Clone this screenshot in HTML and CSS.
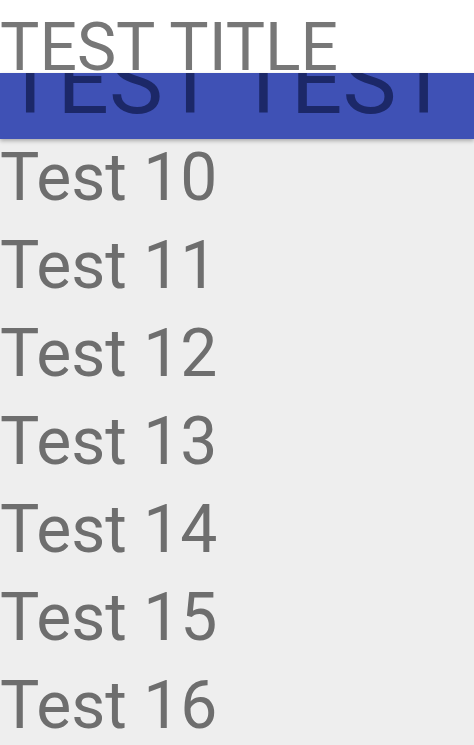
FILE: index.html
```html
<!DOCTYPE html>
<html>
<head>
<meta charset="utf-8">
<link rel="stylesheet" href="styles.css">
</head>
<body>
<div class="title">TEST TITLE</div>
<div class="bar"><div class="bar-text">TEST TEST</div></div>
<ul class="list">
  <li class="row">Test 10</li>
  <li class="row">Test 11</li>
  <li class="row">Test 12</li>
  <li class="row">Test 13</li>
  <li class="row">Test 14</li>
  <li class="row">Test 15</li>
  <li class="row">Test 16</li>
</ul>
</body>
</html>
```
FILE: styles.css
```css
html, body {
  margin: 0;
  padding: 0;
  height: 100%;
  overflow: hidden;
  font-family: Roboto, "Liberation Sans", sans-serif;
  background: #eeeeee;
}
.title {
  box-sizing: border-box;
  height: 73px;
  padding-top: 9px;
  background: #ffffff;
  color: #777777;
  font-size: 66px;
  line-height: 77px;
  white-space: nowrap;
  overflow: visible;
}
.bar {
  position: relative;
  height: 66px;
  overflow: hidden;
  background: #3f51b5;
  box-shadow: 0 2px 4px rgba(0, 0, 0, 0.28);
}
.bar-text {
  padding-left: 3px;
  font-size: 91px;
  line-height: 19px;
  color: #1c2868;
  white-space: nowrap;
}
.list {
  list-style: none;
  margin: 0;
  padding: 0;
  background: #eeeeee;
}
.row {
  font-size: 66px;
  line-height: 77px;
  padding-bottom: 11px;
  color: #6e6e6e;
  white-space: nowrap;
}
```
